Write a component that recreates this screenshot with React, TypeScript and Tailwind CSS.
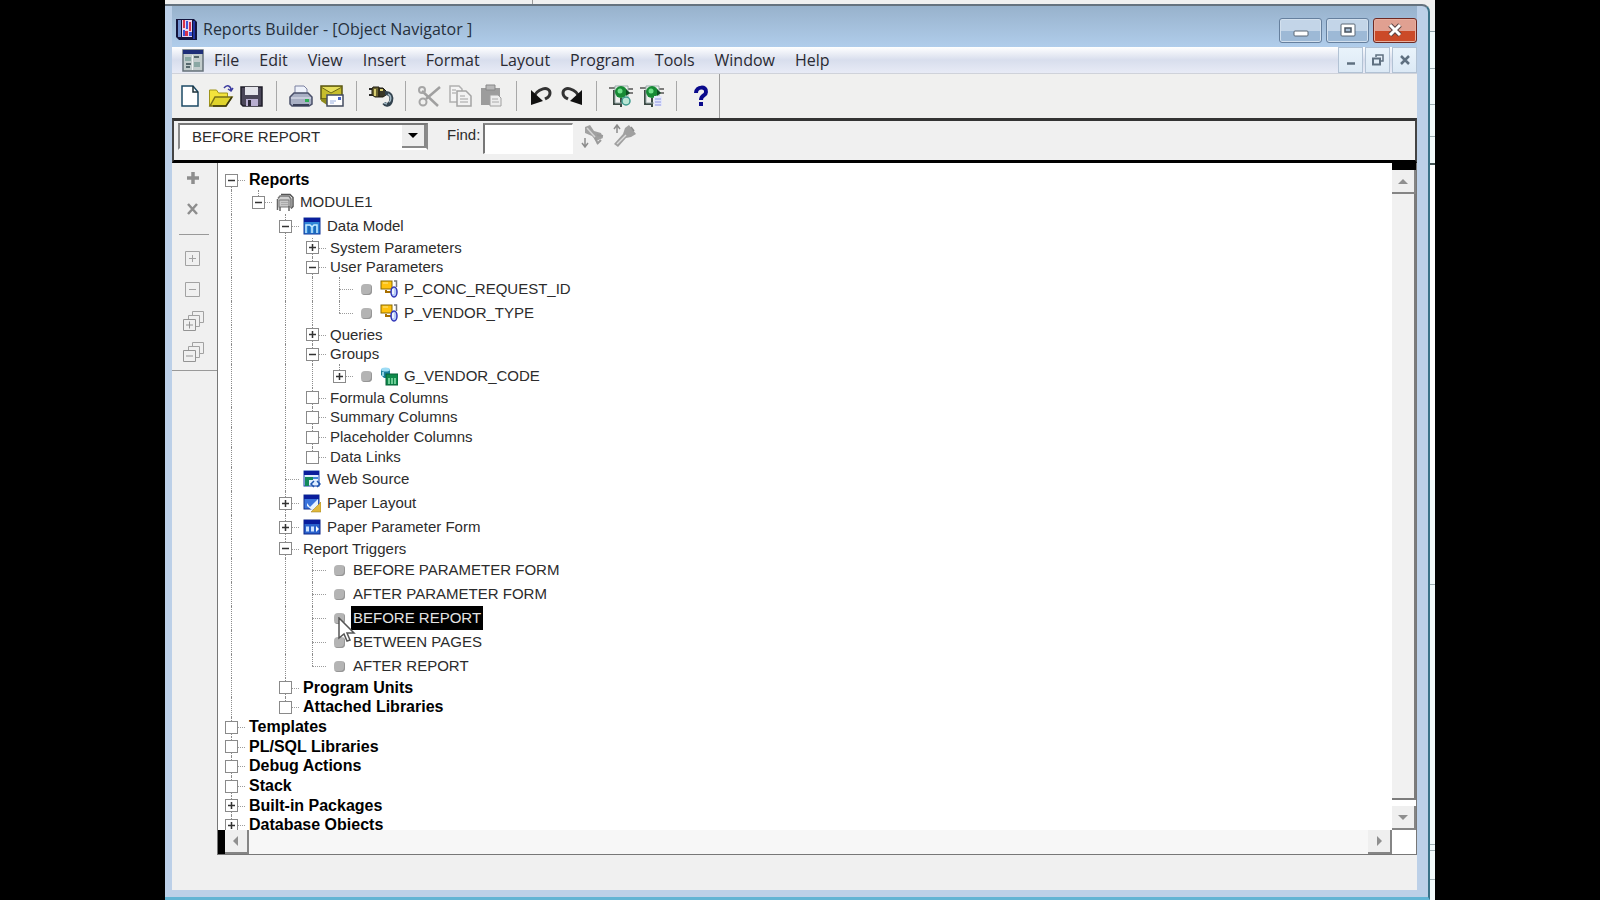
import type { ReactNode } from 'react';
import clsx from 'clsx';

type IconName = 'module' | 'model' | 'param' | 'group' | 'web' | 'layout' | 'form';
type RowSize = 'tight' | 'plain' | 'tall';

interface TreeNode {
  label: string;
  size: RowSize;
  box?: 'plus' | 'minus' | 'empty';
  icon?: IconName;
  bullet?: boolean;
  bold?: boolean;
  selected?: boolean;
  children?: TreeNode[];
}

const rowHeight: Record<RowSize, string> = {
  tight: 'h-[19px]',
  plain: 'h-5',
  tall: 'h-6',
};

const menus = ['File', 'Edit', 'View', 'Insert', 'Format', 'Layout', 'Program', 'Tools', 'Window', 'Help'];

const tree: TreeNode[] = [
  {
    label: 'Reports', size: 'plain', box: 'minus', bold: true,
    children: [
      {
        label: 'MODULE1', size: 'tall', box: 'minus', icon: 'module',
        children: [
          {
            label: 'Data Model', size: 'tall', box: 'minus', icon: 'model',
            children: [
              { label: 'System Parameters', size: 'tight', box: 'plus' },
              {
                label: 'User Parameters', size: 'plain', box: 'minus',
                children: [
                  { label: 'P_CONC_REQUEST_ID', size: 'tall', bullet: true, icon: 'param' },
                  { label: 'P_VENDOR_TYPE', size: 'tall', bullet: true, icon: 'param' },
                ],
              },
              { label: 'Queries', size: 'tight', box: 'plus' },
              {
                label: 'Groups', size: 'plain', box: 'minus',
                children: [{ label: 'G_VENDOR_CODE', size: 'tall', box: 'plus', bullet: true, icon: 'group' }],
              },
              { label: 'Formula Columns', size: 'tight', box: 'empty' },
              { label: 'Summary Columns', size: 'plain', box: 'empty' },
              { label: 'Placeholder Columns', size: 'plain', box: 'empty' },
              { label: 'Data Links', size: 'plain', box: 'empty' },
            ],
          },
          { label: 'Web Source', size: 'tall', icon: 'web' },
          { label: 'Paper Layout', size: 'tall', box: 'plus', icon: 'layout' },
          { label: 'Paper Parameter Form', size: 'tall', box: 'plus', icon: 'form' },
          {
            label: 'Report Triggers', size: 'tight', box: 'minus',
            children: [
              { label: 'BEFORE PARAMETER FORM', size: 'tall', bullet: true },
              { label: 'AFTER PARAMETER FORM', size: 'tall', bullet: true },
              { label: 'BEFORE REPORT', size: 'tall', bullet: true, selected: true },
              { label: 'BETWEEN PAGES', size: 'tall', bullet: true },
              { label: 'AFTER REPORT', size: 'tall', bullet: true },
            ],
          },
          { label: 'Program Units', size: 'tight', box: 'empty', bold: true },
          { label: 'Attached Libraries', size: 'plain', box: 'empty', bold: true },
        ],
      },
    ],
  },
  { label: 'Templates', size: 'plain', box: 'empty', bold: true },
  { label: 'PL/SQL Libraries', size: 'tight', box: 'empty', bold: true },
  { label: 'Debug Actions', size: 'plain', box: 'empty', bold: true },
  { label: 'Stack', size: 'plain', box: 'empty', bold: true },
  { label: 'Built-in Packages', size: 'tight', box: 'plus', bold: true },
  { label: 'Database Objects', size: 'plain', box: 'plus', bold: true },
];

function Svg({ w, h, children }: { w: number; h: number; children: ReactNode }) {
  return (
    <svg width={w} height={h} viewBox={`0 0 ${w} ${h}`} fill="none" className="shrink-0" aria-hidden="true">
      {children}
    </svg>
  );
}

const treeIcons: Record<IconName, ReactNode> = {
  module: (
    <>
      <path d="M5 1.500h9l3 3v9l-2 2" stroke="#555" strokeWidth="1.5" />
      <path d="M2 5.500 4 3h9l2 3v9" stroke="#777" strokeWidth="1.5" fill="#d0d0d0" />
      <rect x="3" y="7" width="10" height="7" fill="#c9c9c9" stroke="#777" />
      <path d="M1.500 17V6M4 14v4M13 13v5" stroke="#666" strokeWidth="1.5" />
      <path d="M5 9.500h7M5 11.500h7" stroke="#aaa" />
    </>
  ),
  model: (
    <>
      <rect x="1" y="1" width="16" height="16" fill="#2f86d8" stroke="#12379a" />
      <rect x="1" y="1" width="16" height="4" fill="#0a1e9c" />
      <path d="M3 16V8h4l2 2 2-2h3v8M9 10v6" stroke="#c8ecff" strokeWidth="1.500" />
      <path d="M6 9v7M12 9v7" stroke="#0d4f9c" />
    </>
  ),
  param: (
    <>
      <rect x="1" y="1" width="11" height="8" fill="#ffc20e" stroke="#8a6a00" />
      <path d="M3 3h5" stroke="#ffe98a" />
      <path d="M6 10v2h5" stroke="#a86f00" strokeWidth="2" />
      <path d="M14 1h2.500v6" stroke="#777" strokeWidth="1.500" />
      <ellipse cx="14" cy="12" rx="3" ry="5" fill="#b9cdf8" stroke="#3036b8" strokeWidth="1.500" />
      <path d="M13 9v5" stroke="#fff" strokeWidth="1.500" />
    </>
  ),
  group: (
    <>
      <path d="M1 2h9v9H4L1 8z" fill="#1b7f9c" />
      <ellipse cx="5.500" cy="2.500" rx="4.500" ry="2" fill="#9edcf5" />
      <path d="M3 5v4" stroke="#b9ecfa" strokeWidth="1.500" />
      <rect x="6" y="7" width="12" height="11" fill="#0f8a4b" stroke="#086038" />
      <path d="M9 11v6M12 11v6M15 11v6" stroke="#8fe3b0" strokeWidth="1.500" />
    </>
  ),
  web: (
    <>
      <rect x="1" y="1" width="15" height="15" fill="#dfeeff" stroke="#1443a8" />
      <rect x="1" y="1" width="15" height="4" fill="#0a1e9c" />
      <path d="M2 16V7h8v3H6v6z" fill="#138a5b" />
      <path d="M10 8h5" stroke="#3f86d8" strokeWidth="2" />
      <path d="m11 11-3 3 3 3M14 11l3 3-3 3" stroke="#1d55b0" strokeWidth="1.500" />
    </>
  ),
  layout: (
    <>
      <rect x="1" y="1" width="15" height="14" fill="#3a74dc" stroke="#10308c" />
      <rect x="1" y="1" width="15" height="4" fill="#0a1e9c" />
      <path d="m4 9 3 4 8-8v9l-6 2-5-4z" fill="#e8f4ff" />
      <path d="M18 8v10H8z" fill="#e0b93c" stroke="#9a7b18" strokeWidth=".5" />
    </>
  ),
  form: (
    <>
      <rect x="1" y="2" width="16" height="14" fill="#2a62cc" stroke="#0c2488" />
      <rect x="1" y="2" width="16" height="4" fill="#0a1e9c" />
      <path d="M3 8.500h3v5H3zM8 8.500h3v5H8z" fill="#cfe4ff" />
      <path d="M13 8v6l3-3z" fill="#fff" />
    </>
  ),
};

function ExpandBox({ kind }: { kind: 'plus' | 'minus' | 'empty' }) {
  return (
    <button type="button" aria-label={kind} className="relative flex size-[13px] items-center justify-center border border-[#8a8a8a] bg-white">
      {kind !== 'empty' && (
        <Svg w={7} h={7}>
          <path d={kind === 'plus' ? 'M0 3.500h7M3.500 0v7' : 'M0 3.500h7'} stroke="#333" strokeWidth="1.500" />
        </Svg>
      )}
    </button>
  );
}

function Cursor() {
  return (
    <span className="absolute top-1 left-3 z-10">
      <Svg w={18} h={26}>
        <path d="M1 1v20l5-4 3 7 3-1-3-7h7z" fill="#fff" stroke="#555" strokeWidth="1.500" />
      </Svg>
    </span>
  );
}

// trail holds, for each ancestor, whether its guide line carries on below
function Branch({ nodes, trail }: { nodes: TreeNode[]; trail: boolean[] }) {
  return (
    <ul>
      {nodes.map((node, i) => {
        const last = i === nodes.length - 1;
        const first = i === 0 && trail.length === 0;
        return (
          <li key={node.label}>
            <div className={clsx('flex items-center', rowHeight[node.size])}>
              {trail.map((open, level) => (
                <span key={level} className="flex h-full w-[27px] shrink-0 justify-center">
                  {open && <span className="border-l border-dotted border-[#8c8c8c]" />}
                </span>
              ))}
              <span className="relative flex h-full w-[27px] shrink-0 items-center justify-center">
                <span
                  className={clsx(
                    'absolute left-[13px] border-l border-dotted border-[#8c8c8c]',
                    first ? 'top-1/2' : 'top-0',
                    last && trail.length > 0 ? 'bottom-1/2' : 'bottom-0',
                  )}
                />
                <span className="absolute top-1/2 right-0 left-[13px] border-t border-dotted border-[#9c9c9c]" />
                {node.box && <ExpandBox kind={node.box} />}
              </span>
              {node.bullet && (
                <span className="relative flex w-[27px] shrink-0 justify-center">
                  <span className="size-[11px] rounded-[4px] bg-[#b4b4b4] shadow-[inset_-1px_-1px_0_#969696]" />
                  {node.selected && <Cursor />}
                </span>
              )}
              {!node.bullet && <span className="w-1 shrink-0" />}
              {node.icon && (
                <span className="mr-1.5">
                  <Svg w={18} h={19}>{treeIcons[node.icon]}</Svg>
                </span>
              )}
              <span
                className={clsx(
                  'whitespace-nowrap',
                  node.bold && 'text-base leading-5 font-bold text-black',
                  node.selected && '-mx-0.5 bg-black px-0.5 leading-6 text-[#e4e4e4]',
                )}
              >
                {node.label}
              </span>
            </div>
            {node.children && <Branch nodes={node.children} trail={[...trail, !last]} />}
          </li>
        );
      })}
    </ul>
  );
}

function ToolButton({ label, children }: { label: string; children: ReactNode }) {
  return (
    <button type="button" aria-label={label} className="flex h-[31px] w-[31px] shrink-0 items-center justify-center">
      <Svg w={26} h={24}>{children}</Svg>
    </button>
  );
}

function Separator() {
  return (
    <span className="flex h-[30px] w-[18px] shrink-0 justify-center">
      <span className="border-l border-[#a8a8a8]" />
    </span>
  );
}

function RunIcon({ web }: { web?: boolean }) {
  return (
    <>
      <path d="M1 4h6M5 7h3M20 5h5M20 9h5" stroke="#555" strokeWidth="1.500" />
      <path d="M6 6v14h7M13 14v9" stroke="#3c4a44" strokeWidth="2" />
      <path d="M7 2h13v17H7z" stroke="#9aa" />
      <circle cx="13" cy="8" r="6" fill="#178a35" />
      <path d="M18 5v7l4-3z" fill="#0c4d22" />
      <circle cx="12" cy="7" r="2.500" fill="#6fe08a" />
      {web ? (
        <circle cx="18" cy="17" r="4" fill="#b8e6d4" stroke="#3b9a8c" strokeWidth="1.500" />
      ) : (
        <>
          <rect x="15" y="12" width="8" height="10" fill="#e3e6fb" />
          <path d="M16 15h6M16 18h6M16 21h6" stroke="#8f96e0" />
        </>
      )}
    </>
  );
}

function Toolbar() {
  return (
    <div className="flex h-11 shrink-0 items-center bg-[#f0f0ef]">
      <div className="flex h-full items-center border-r border-[#9c9c9c] pr-[3px] pl-0.5">
        <ToolButton label="New">
          <path d="M5 2h11l5 6v14H5z" fill="#fff" stroke="#1d4a66" strokeWidth="1.500" />
          <path d="M16 2v6h5" stroke="#1d3038" strokeWidth="1.500" />
        </ToolButton>
        <ToolButton label="Open">
          <path d="M1.500 22V6h7l2 3h9v4" fill="#f3e33c" stroke="#a09418" />
          <path d="m2 22 5-9h17l-6 9z" fill="#e0d42c" stroke="#7a7218" strokeWidth="1.500" />
          <path d="M5 22h13l6-9" stroke="#3c380e" strokeWidth="1.500" />
          <path d="M16 4c3-4 7-2 7 2m-3-1 3 2 2-3" stroke="#3c3ca0" strokeWidth="1.500" />
        </ToolButton>
        <ToolButton label="Save">
          <path d="M2 3h21v19H4l-2-2z" fill="#4a4658" stroke="#1e1c28" strokeWidth="1.500" />
          <rect x="6" y="3" width="13" height="8" fill="#e4e4ea" />
          <rect x="7" y="15" width="12" height="7" fill="#b8aed0" />
          <rect x="9" y="16" width="3" height="6" fill="#2c2838" />
        </ToolButton>
        <Separator />
        <ToolButton label="Print">
          <path d="M7 11V2h9l3 3v6" fill="#eef2fb" stroke="#7a80a0" />
          <path d="m2 13 4-4h14l4 4v7l-3 2H4l-2-2z" fill="#a9b0c4" stroke="#4a506a" strokeWidth="1.500" />
          <path d="M3 14h20" stroke="#e6e9f4" />
          <rect x="17" y="15" width="4" height="3" fill="#2fae55" />
          <path d="M5 21h16" stroke="#3a4058" strokeWidth="2" />
        </ToolButton>
        <ToolButton label="Mail">
          <path d="M2 2h21v13H2z" fill="#c6bd2c" stroke="#5a5612" strokeWidth="1.500" />
          <path d="m2 3 10 6 11-6" fill="#e6de5c" stroke="#6c6716" />
          <path d="M2 15h6v6l-6-4z" fill="#8f8a1c" />
          <rect x="8" y="11" width="16" height="11" fill="#fff" stroke="#444c60" strokeWidth="1.500" />
          <path d="M11 17h6M11 19h4" stroke="#9ab0e0" />
          <rect x="19" y="13" width="3" height="3" fill="#4a66c8" />
        </ToolButton>
        <Separator />
        <ToolButton label="Connect">
          <path d="M1 5h5M1 11h5" stroke="#2b2b2b" strokeWidth="2" />
          <path d="M5 3h6v10H7l-3-2V5z" fill="#6b6330" stroke="#1e1c12" />
          <path d="M11 4h4l3 3v4l-3 2h-4z" fill="#3a3828" stroke="#1e1c12" />
          <path d="M7 5v7M12 6h3" stroke="#d8cf72" strokeWidth="2" />
          <path d="M17 9c6 0 7 4 6 8s-5 5-7 2" stroke="#33434f" strokeWidth="4" />
          <path d="M20 10c4 2 3 7 1 8M16 19l3 1" stroke="#9fb6c2" strokeWidth="1.500" />
        </ToolButton>
        <Separator />
        <ToolButton label="Cut">
          <path d="M23 3 9 15M5 7l16 15" stroke="#a0a0a0" strokeWidth="2.500" />
          <circle cx="5" cy="6" r="3" stroke="#a6a6a6" strokeWidth="2" />
          <circle cx="6" cy="18" r="3.500" stroke="#a6a6a6" strokeWidth="2" />
        </ToolButton>
        <ToolButton label="Copy">
          <path d="M2 2h9l3 3v13H2z" fill="#f4f4f4" stroke="#b0b0b0" strokeWidth="1.500" />
          <path d="M9 7h9l5 5v10H9z" fill="#f2f2f2" stroke="#a4a4a4" strokeWidth="1.500" />
          <path d="M12 12h5M12 15h8M12 18h8M4 6h4M4 9h4" stroke="#bcbcbc" strokeWidth="1.500" />
        </ToolButton>
        <ToolButton label="Paste">
          <path d="M2 4h19v17H2z" fill="#9c9c9c" />
          <path d="M7 1h9v5H7z" fill="#b8b8b8" stroke="#888" />
          <path d="M11 11h8l3 3v8H11z" fill="#ededed" stroke="#a0a0a0" />
          <path d="M13 15h6M13 18h7" stroke="#aaa" />
        </ToolButton>
        <Separator />
        <ToolButton label="Undo">
          <path d="M5 15C9 3 22 2 22 9c0 4-3 5-5 6" stroke="#333" strokeWidth="3" />
          <path d="M3 6v15l12-4z" fill="#111" />
        </ToolButton>
        <ToolButton label="Redo">
          <path d="M21 15C17 3 4 2 4 9c0 4 3 5 5 6" stroke="#333" strokeWidth="3" />
          <path d="M23 6v15l-12-4z" fill="#111" />
        </ToolButton>
        <Separator />
        <ToolButton label="Run Web Layout">
          <RunIcon web />
        </ToolButton>
        <ToolButton label="Run Paper Layout">
          <RunIcon />
        </ToolButton>
        <Separator />
        <button type="button" aria-label="Help" className="flex h-[31px] w-[31px] items-center justify-center">
          <Svg w={16} h={22}>
            <path d="M3 8C3 1 14 1 13 7c0 4-5 3-5 8" stroke="#0a0a8c" strokeWidth="4" />
            <rect x="6" y="17" width="4" height="4" fill="#0a0a8c" />
          </Svg>
        </button>
      </div>
    </div>
  );
}

function FindBar() {
  return (
    <div className="flex h-[45px] shrink-0 items-start border-x-2 border-y-[3px] border-x-[#444] border-t-[#333] border-b-black bg-[#f0f0f0] px-1 pt-0.5">
      <div className="relative h-[27px] w-[250px] border-2 border-t-[#777] border-r-[#8a8a8a] border-b-white border-l-[#8a8a8a] bg-white">
        <select aria-label="Current object" defaultValue="BEFORE REPORT" className="h-full w-full appearance-none bg-transparent pl-3">
          <option>BEFORE REPORT</option>
        </select>
        <span className="pointer-events-none absolute inset-y-0 right-0 flex w-6 items-center justify-center border-r-2 border-b-2 border-[#888] bg-[#eee]">
          <Svg w={10} h={5}>
            <path d="M0 0h10L5 5z" fill="#000" />
          </Svg>
        </span>
      </div>
      <label htmlFor="find" className="ml-[19px] w-9 leading-6">Find:</label>
      <input id="find" type="text" className="h-[31px] w-[90px] border-t-2 border-r border-b border-l-2 border-t-[#888] border-r-white border-b-white border-l-[#777] bg-white px-1" />
      <button type="button" aria-label="Find next" className="ml-2 flex h-[25px] w-6 items-center justify-center">
        <Svg w={24} h={24}>
          <path d="m4 3 5-2 4 6 7 2 2 5-7 3-4-5-7-3z" fill="#a0a0a0" />
          <path d="m6 4 8 9" stroke="#d4d4d4" strokeWidth="1.500" />
          <path d="m16 11 6 1M14 14l3 6M16 20l4-4" stroke="#9a9a9a" strokeWidth="2" />
          <path d="M4 14v8M1 19l3 4 3-4" stroke="#8c8c8c" strokeWidth="1.500" />
        </Svg>
      </button>
      <button type="button" aria-label="Find previous" className="ml-2 flex h-[25px] w-6 items-center justify-center">
        <Svg w={24} h={24}>
          <path d="m1 20 9-10 2-6 4-3 7 9-5 3-5 1-8 9z" fill="#a0a0a0" />
          <path d="m4 20 9-9" stroke="#dcdcdc" strokeWidth="1.500" />
          <path d="M4 9V1M1 5l3-4 3 4M18 3l3 4" stroke="#8c8c8c" strokeWidth="1.500" />
        </Svg>
      </button>
    </div>
  );
}

function SideButton({ label, children }: { label: string; children: ReactNode }) {
  return (
    <button type="button" aria-label={label} className="flex h-[31px] w-full items-center justify-center pr-1">
      <Svg w={22} h={22}>{children}</Svg>
    </button>
  );
}

function Sidebar() {
  return (
    <aside className="w-[45px] shrink-0">
      <div className="h-52 border-b border-[#999]">
        <SideButton label="Create">
          <path d="M11 4v12M5 10h12" stroke="#8e8e8e" strokeWidth="3.500" />
        </SideButton>
        <SideButton label="Delete">
          <path d="m6 5 9 10M15 5 6 15" stroke="#8e8e8e" strokeWidth="2.500" />
        </SideButton>
        <div className="flex h-[19px] items-center pr-2 pl-[7px]">
          <span className="w-full border-t border-[#999]" />
        </div>
        <SideButton label="Expand">
          <path d="M3.500 2.500h14v14h-14zM7 9.500h7M10.500 6v7" stroke="#a2a2a2" />
        </SideButton>
        <SideButton label="Collapse">
          <path d="M3.500 2.500h14v14h-14zM7 9.500h7" stroke="#a2a2a2" />
        </SideButton>
        <SideButton label="Expand All">
          <path d="M10.500 4.500v-4h11v11h-4M6.500 8.500v-4h11v11h-4" stroke="#a2a2a2" />
          <path d="M1.500 8.500h12v11h-12zM4 14h7M7.500 10.500v7" stroke="#949494" />
        </SideButton>
        <SideButton label="Collapse All">
          <path d="M10.500 4.500v-4h11v11h-4M6.500 8.500v-4h11v11h-4" stroke="#a2a2a2" />
          <path d="M1.500 8.500h12v11h-12zM4 14h7" stroke="#949494" />
        </SideButton>
      </div>
    </aside>
  );
}

const arrows = {
  up: 'M0 8 5 3l5 5z',
  down: 'M0 3h10L5 8z',
  left: 'M7 0v10L2 5z',
  right: 'M3 0v10l5-5z',
};

function ScrollButton({ dir }: { dir: keyof typeof arrows }) {
  return (
    <button type="button" aria-label={`Scroll ${dir}`} className="flex size-6 shrink-0 items-center justify-center border-r-2 border-b-2 border-[#858585] bg-[#efefef]">
      <Svg w={10} h={10}>
        <path d={arrows[dir]} fill="#8f8f8f" />
      </Svg>
    </button>
  );
}

function Navigator() {
  return (
    <main className="flex min-w-0 flex-1 flex-col border-r border-b border-l border-[#777] bg-white">
      <div className="flex min-h-0 flex-1">
        <div className="min-w-0 flex-1 overflow-hidden pt-[7px] text-[#2c2c2c]">
          <Branch nodes={tree} trail={[]} />
        </div>
        <div className="flex w-6 shrink-0 flex-col">
          <div className="h-[7px] shrink-0 bg-black" />
          <ScrollButton dir="up" />
          <div className="flex-1 border-r-2 border-b-2 border-[#7c7c7c] bg-[#f1f1f1]" />
          <div className="h-1.5 shrink-0" />
          <ScrollButton dir="down" />
        </div>
      </div>
      <div className="flex h-6 shrink-0">
        <div className="w-[7px] shrink-0 bg-black" />
        <ScrollButton dir="left" />
        <div className="flex-1 bg-[#f7f7f7]" />
        <ScrollButton dir="right" />
        <div className="w-6 shrink-0" />
      </div>
    </main>
  );
}

function TitleBar() {
  return (
    <header className="flex h-[41px] shrink-0 items-center bg-linear-to-b from-[#98b2cc] to-[#b0cdeb] pt-1 pl-[3px]">
      <Svg w={22} h={24}>
        <path d="M1 2h18l3 3v18H4L1 20z" fill="#14143c" />
        <path d="M3 3h3v17H3z" fill="#6f8fd0" />
        <path d="M7 3h10v17H7z" fill="#e8d4ee" />
        <path d="M8 3h2v8H8zM14 5h2v9h-2zM10 14h3v5h-3z" fill="#d8324a" />
        <path d="M11 4h2v8h-2zM8 13h2v6H8zM14 15h3v4h-3z" fill="#3c56d8" />
        <path d="M19 4v18" stroke="#1f33a0" strokeWidth="2" />
      </Svg>
      <h1 className="ml-1.5 flex-1 font-[Open_Sans,Noto_Sans,sans-serif] text-base text-[#26303c]">Reports Builder - [Object Navigator ]</h1>
      <div className="mt-1 flex gap-1">
        <button type="button" aria-label="Minimize" className="flex h-[25px] w-[43px] items-center justify-center rounded-[3px] border border-[#66809e] bg-linear-to-b from-[#c3d5e8] from-50% to-[#9db9d6] to-50% shadow-[inset_0_0_0_1px_#d2e0ee]">
          <Svg w={16} h={15}>
            <rect x="1" y="8" width="14" height="5" rx="1" fill="#fff" stroke="#5a6674" />
          </Svg>
        </button>
        <button type="button" aria-label="Maximize" className="flex h-[25px] w-[43px] items-center justify-center rounded-[3px] border border-[#66809e] bg-linear-to-b from-[#c3d5e8] from-50% to-[#9db9d6] to-50% shadow-[inset_0_0_0_1px_#d2e0ee]">
          <Svg w={16} h={15}>
            <rect x="1" y="1" width="14" height="12" rx="1" fill="#fff" stroke="#5a6674" />
            <rect x="5" y="5" width="6" height="4" fill="#a9bfd6" stroke="#4a5460" strokeWidth="1.500" />
          </Svg>
        </button>
        <button type="button" aria-label="Close" className="flex h-[25px] w-11 items-center justify-center rounded-[3px] border border-[#6e2a24] bg-linear-to-b from-[#e0a091] from-50% to-[#cb4a28] to-50% shadow-[inset_0_0_0_1px_#e8b0a0]">
          <Svg w={16} h={15}>
            <path d="m3 2 10 10M13 2 3 12" stroke="#5c4444" strokeWidth="5" />
            <path d="m3 2 10 10M13 2 3 12" stroke="#fff" strokeWidth="3" />
          </Svg>
        </button>
      </div>
    </header>
  );
}

function MdiButton({ label, children }: { label: string; children: ReactNode }) {
  return (
    <button type="button" aria-label={label} className="flex h-[26px] w-[25px] items-center justify-center border border-[#b2c2d4] bg-linear-to-b from-[#e9f3fb] to-[#dce9f5]">
      <Svg w={14} h={14}>{children}</Svg>
    </button>
  );
}

function MenuBar() {
  return (
    <nav className="flex h-[27px] shrink-0 items-center border-b border-[#cfd2da] bg-linear-to-b from-white via-[#d8deed] to-[#e8ebf6] pl-2.5 font-[Open_Sans,Noto_Sans,sans-serif] text-base leading-5 text-[#2a2a32]">
      <Svg w={22} h={23}>
        <rect x="1" y="1" width="20" height="21" fill="#c2cccc" stroke="#66727a" strokeWidth="1.500" />
        <rect x="1" y="1" width="20" height="4" fill="#1f2f78" />
        <path d="M3 8h6v4H3zM12 13h6v5h-6z" fill="#8aa8a4" />
        <path d="M12 8h5M4 15h5M4 18h4" stroke="#56686c" strokeWidth="2" />
        <path d="M10.500 6v15" stroke="#eef2f2" />
      </Svg>
      <div className="flex flex-1">
        {menus.map((menu) => (
          <button key={menu} type="button" className="px-2.5">{menu}</button>
        ))}
      </div>
      <div className="flex gap-0.5">
        <MdiButton label="Minimize document">
          <path d="M3 10.500h8" stroke="#5f7080" strokeWidth="2.500" />
        </MdiButton>
        <MdiButton label="Restore document">
          <path d="M5 4V2h7v6h-3" stroke="#5f7080" strokeWidth="1.500" />
          <rect x="2" y="5.500" width="7" height="6" stroke="#5f7080" strokeWidth="2" />
        </MdiButton>
        <MdiButton label="Close document">
          <path d="m3 3 8 8M11 3l-8 8" stroke="#5f7080" strokeWidth="2.500" />
        </MdiButton>
      </div>
    </nav>
  );
}

// sliver of the window lying behind this one
function BackWindowEdge() {
  return (
    <div className="flex w-[5px] shrink-0 flex-col bg-[#f1fafb]">
      <div className="h-7 border-b border-[#8fa3a8] bg-[#eef0f0]" />
      <div className="h-[37px] border-b border-[#9fb0b4]" />
      <div className="h-9 border-b border-[#9fb0b4]" />
      <div className="h-8 border-b border-[#9fb0b4]" />
      <div className="h-7 border-b-2 border-[#455]" />
      <div className="flex-1 bg-white" />
      <div className="h-[420px] bg-[#f1fafb]">
        <div className="h-[105px] border-b border-[#9fb0b4]" />
        <div className="h-[260px] border-b border-[#9fb0b4]" />
        <div className="h-1.5 border-b border-[#9fb0b4]" />
        <div className="h-[29px] border-b border-[#9fb0b4]" />
      </div>
    </div>
  );
}

export default function App() {
  return (
    <div className="flex h-screen flex-col bg-black px-[165px] font-[Liberation_Sans,Arial,sans-serif] text-[15px] leading-5 text-[#2c2c2c]">
      <div className="flex h-1 shrink-0 bg-[#f0f0f0]">
        <div className="w-[368px] border-r border-[#999]" />
      </div>
      <div className="flex min-h-0 flex-1 bg-[#f0f0f0]">
        <div className="flex min-w-0 flex-1 flex-col rounded-tr-lg border-t-2 border-r-2 border-b-[3px] border-t-[#66737f] border-r-[#3a7288] border-b-[#62b4d4] bg-[#bcd0e8] pr-[11px] pl-[7px]">
          <TitleBar />
          <div className="flex min-h-0 flex-1 flex-col bg-[#f0f0f0]">
            <MenuBar />
            <Toolbar />
            <FindBar />
            <div className="flex min-h-0 flex-1">
              <Sidebar />
              <Navigator />
            </div>
            <footer className="h-[35px] shrink-0" />
          </div>
          <div className="h-[7px] shrink-0" />
        </div>
        <BackWindowEdge />
      </div>
    </div>
  );
}
